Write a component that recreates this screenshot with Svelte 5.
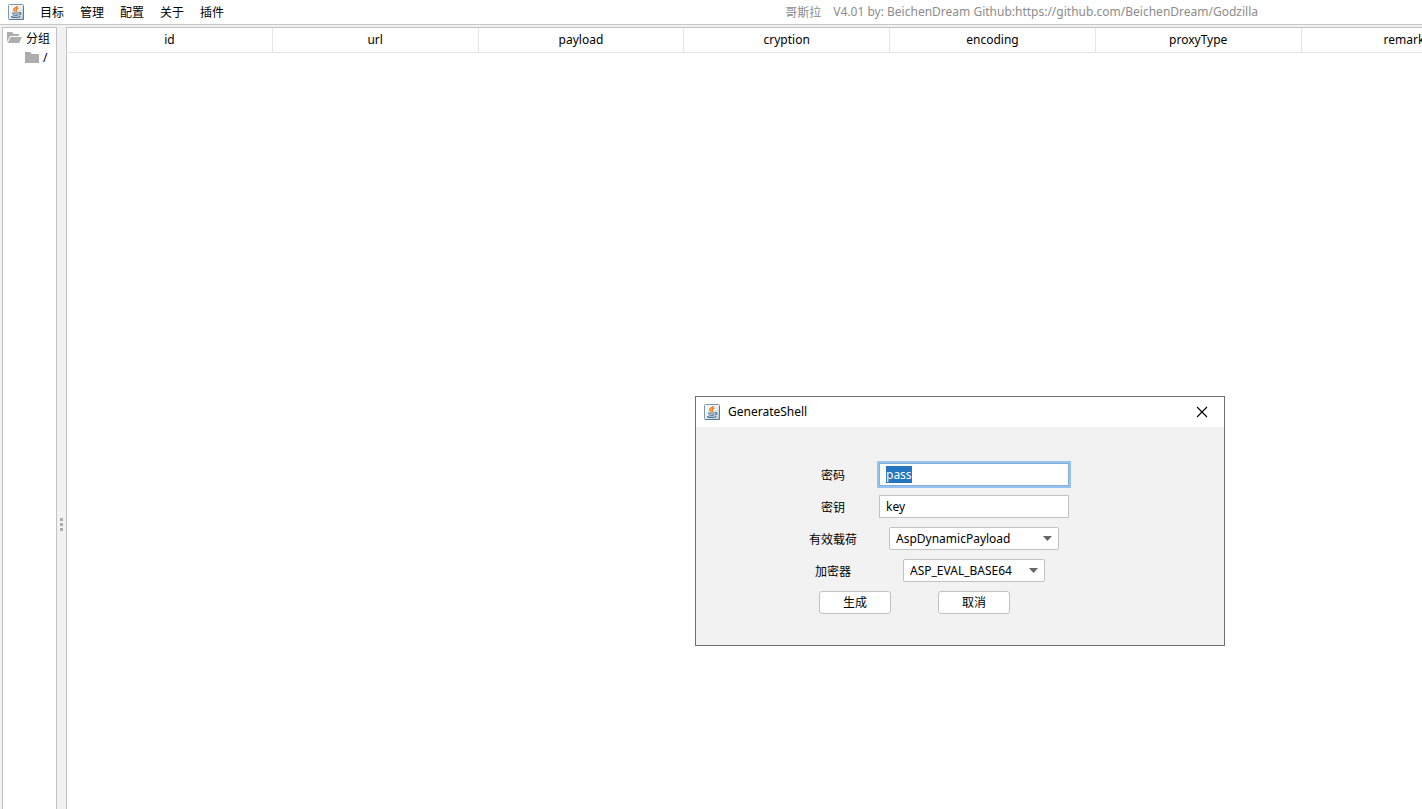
<script lang="ts">
	import { onMount } from 'svelte';

	const menus = ['目标', '管理', '配置', '关于', '插件'];
	const columns = ['id', 'url', 'payload', 'cryption', 'encoding', 'proxyType', 'remark'];

	let password = 'pass';
	let secret = 'key';
	let payload = 'AspDynamicPayload';
	let cryption = 'ASP_EVAL_BASE64';
	let dialogOpen = true;
	let passwordInput: HTMLInputElement;

	function closeDialog() {
		dialogOpen = false;
	}

	onMount(() => {
		passwordInput.focus();
		passwordInput.select();
	});
</script>

{#snippet javaIcon()}
	<svg class="java-icon" width="16" height="16" viewBox="0 0 16 16" aria-hidden="true">
		<defs>
			<linearGradient id="java-face" x1="0" y1="0" x2="1" y2="1">
				<stop offset="0" stop-color="#fff" />
				<stop offset="0.5" stop-color="#e9eff4" />
				<stop offset="1" stop-color="#b5c8d6" />
			</linearGradient>
		</defs>
		<rect x="0.5" y="0.5" width="15" height="15" rx="1" fill="url(#java-face)" stroke="#7d98ad" />
		<path d="M15.5 2V15.5H1" fill="none" stroke="#587992" />
		<path d="M9 1.8C9.4 3.5 5.4 4 5.6 5.6C5.8 6.6 7 7 7.2 8M10.4 4C8.4 4.6 7.6 5.4 8.3 6.3C8.8 7 8.7 7.5 8.2 8" fill="none" stroke="#ee7d20" stroke-width="1.4" />
		<path d="M4 8.7C5.3 9.3 9 9.3 10.5 8.7M4.6 10.7C6.3 11.3 8.8 11.3 10.2 10.7M10.8 8.8C13.8 8 13.4 10.5 10.8 11M3 12.6C5.3 13.7 10 13.7 12.4 12.5" fill="none" stroke="#4c728f" stroke-width="1.2" />
	</svg>
{/snippet}

<div class="app">
	<header class="menubar">
		{@render javaIcon()}
		<nav class="menus">
			{#each menus as menu}
				<button type="button" class="menu">{menu}</button>
			{/each}
		</nav>
		<div class="window-title">
			<span class="cjk">哥斯拉</span>
			<span class="about">V4.01 by: BeichenDream Github:https://github.com/BeichenDream/Godzilla</span>
		</div>
	</header>

	<main class="split">
		<aside class="tree">
			<div class="node">
				<svg width="15" height="12" viewBox="0 0 15 12" aria-hidden="true">
					<path d="M0 10V0H5L7 2H12V4H3L0 10Z" fill="#adadad" />
					<path d="M3.6 5H15L12 11H0.6Z" fill="#adadad" />
				</svg>
				<span class="cjk">分组</span>
			</div>
			<div class="node child">
				<svg width="14" height="12" viewBox="0 0 14 12" aria-hidden="true">
					<path d="M0 0H5L7 2H14V11H0Z" fill="#adadad" />
				</svg>
				<span>/</span>
			</div>
		</aside>
		<div class="divider"><i></i><i></i><i></i></div>
		<section class="shells">
			<table>
				<thead>
					<tr>
						{#each columns as column}
							<th scope="col"><span>{column}</span></th>
						{/each}
					</tr>
				</thead>
				<tbody></tbody>
			</table>
		</section>
	</main>

	{#if dialogOpen}
		<div class="dialog" role="dialog" aria-labelledby="dialog-title">
			<div class="titlebar">
				{@render javaIcon()}
				<span id="dialog-title">GenerateShell</span>
				<button type="button" class="close" aria-label="Close" on:click={closeDialog}>
					<svg width="12" height="12" viewBox="0 0 12 12" aria-hidden="true">
						<path d="M1 1L11 11M11 1L1 11" stroke="#000" stroke-width="1.1" />
					</svg>
				</button>
			</div>
			<form on:submit|preventDefault>
				<div class="fields">
					<label for="password">密码</label>
					<input id="password" type="text" bind:value={password} bind:this={passwordInput} />
					<label for="secret">密钥</label>
					<input id="secret" type="text" bind:value={secret} />
					<label for="payload">有效载荷</label>
					<div class="combo">
						<select id="payload" class="payload" bind:value={payload}>
							<option>AspDynamicPayload</option>
						</select>
						<svg width="9" height="5" viewBox="0 0 9 5" aria-hidden="true"><path d="M0 0H9L4.5 5Z" fill="#666" /></svg>
					</div>
					<label for="cryption">加密器</label>
					<div class="combo">
						<select id="cryption" class="cryption" bind:value={cryption}>
							<option>ASP_EVAL_BASE64</option>
						</select>
						<svg width="9" height="5" viewBox="0 0 9 5" aria-hidden="true"><path d="M0 0H9L4.5 5Z" fill="#666" /></svg>
					</div>
				</div>
				<div class="actions">
					<button type="submit">生成</button>
					<button type="button" on:click={closeDialog}>取消</button>
				</div>
			</form>
		</div>
	{/if}
</div>

<style>
	:global(body) {
		background: #f2f2f2;
	}

	.app {
		position: relative;
		display: flex;
		flex-direction: column;
		min-height: 100vh;
		overflow: hidden;
		font-family: 'Noto Sans', 'Noto Sans CJK SC', sans-serif;
		font-size: 12px;
		line-height: 16px;
		color: #000;
	}

	button,
	input,
	select {
		box-sizing: border-box;
		margin: 0;
		font: inherit;
		color: inherit;
	}

	svg {
		display: block;
		flex: none;
	}

	.cjk,
	.menu,
	label,
	.actions button {
		font-family: 'Noto Sans CJK SC', sans-serif;
		font-size: 12px;
	}

	.menubar {
		display: flex;
		align-items: center;
		height: 24px;
		padding-left: 8px;
		background: #fff;
		border-bottom: 1px solid #c8c8c8;
	}

	.menus {
		display: flex;
		padding-left: 8px;
	}

	.menu {
		padding: 0 8px;
		border: 0;
		background: none;
	}

	.window-title {
		display: flex;
		gap: 12px;
		margin-left: auto;
		padding-right: 164px;
		line-height: 18px;
		white-space: nowrap;
		color: #8c8c8c;
	}

	.split {
		display: flex;
		flex: 1;
		padding: 2px 0 0 2px;
	}

	.tree {
		box-sizing: border-box;
		width: 55px;
		padding-left: 4px;
		border: 1px solid #c2c2c2;
		border-bottom: 0;
		background: #fff;
	}

	.node {
		display: flex;
		align-items: center;
		gap: 4px;
		height: 20px;
	}

	.child {
		padding-left: 18px;
	}

	.divider {
		display: flex;
		flex-direction: column;
		align-items: center;
		justify-content: center;
		gap: 2px;
		width: 9px;
		padding-top: 212px;
	}

	.divider i {
		width: 3px;
		height: 3px;
		background: #adadad;
	}

	.shells {
		flex: 1;
		min-width: 0;
		overflow: hidden;
		border: solid #c2c2c2;
		border-width: 1px 0 0 1px;
		background: #fff;
	}

	table {
		width: 106.3%;
		table-layout: fixed;
		border-collapse: collapse;
	}

	th {
		height: 24px;
		padding: 0;
		border-bottom: 1px solid #e5e5e5;
		font-weight: 400;
	}

	th span {
		display: block;
		line-height: 24px;
		border-right: 1px solid #e5e5e5;
	}

	.dialog {
		position: absolute;
		top: 396px;
		left: 695px;
		box-sizing: border-box;
		width: 530px;
		border: 1px solid #707070;
		background: #f2f2f2;
	}

	.titlebar {
		display: flex;
		align-items: center;
		gap: 8px;
		height: 30px;
		padding-left: 8px;
		background: #fff;
	}

	.close {
		display: grid;
		place-items: center;
		width: 45px;
		height: 30px;
		margin-left: auto;
		padding: 0;
		border: 0;
		background: none;
	}

	form {
		padding: 36px 0 31px 113px;
	}

	.fields {
		display: grid;
		grid-template-columns: 48px 190px;
		column-gap: 22px;
		row-gap: 9px;
		align-items: center;
		justify-items: center;
	}

	label {
		line-height: 22px;
		white-space: nowrap;
	}

	input {
		width: 190px;
		height: 23px;
		padding: 0 6px;
		border: 1px solid #c2c2c2;
		border-radius: 0;
		background: #fff;
		outline: none;
	}

	input:focus {
		border-color: #87afda;
		box-shadow: 0 0 0 2px #97c3f3;
	}

	input::selection {
		background: #2675bf;
		color: #fff;
	}

	.combo {
		position: relative;
	}

	.combo svg {
		position: absolute;
		top: 9px;
		right: 7px;
		pointer-events: none;
	}

	select {
		display: block;
		height: 23px;
		padding: 0 24px 0 6px;
		border: 1px solid #c2c2c2;
		border-radius: 2px;
		background: #fff;
		appearance: none;
	}

	.payload {
		width: 170px;
	}

	.cryption {
		width: 142px;
	}

	.actions {
		display: flex;
		gap: 47px;
		padding: 9px 0 0 10px;
	}

	.actions button {
		width: 72px;
		height: 23px;
		padding: 0 0 2px;
		border: 1px solid #c2c2c2;
		border-radius: 3px;
		background: #fff;
	}
</style>
